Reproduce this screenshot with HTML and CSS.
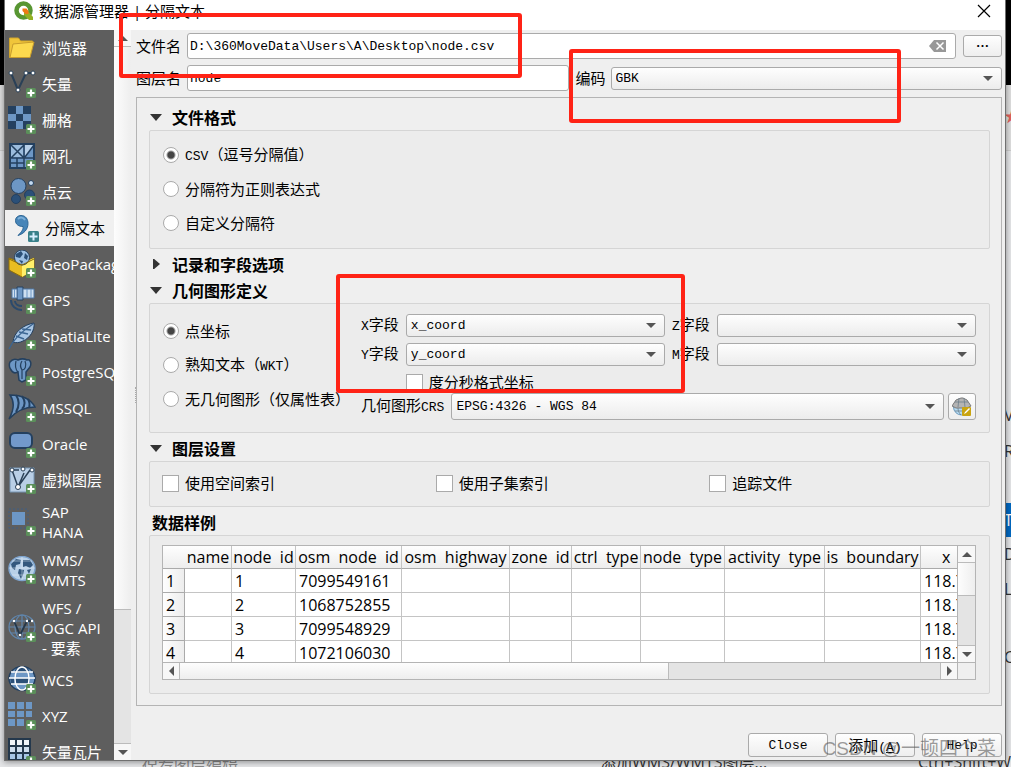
FILE: index.html
```html
<!DOCTYPE html>
<html lang="zh-CN">
<head>
    <meta charset="UTF-8">
    <meta name="viewport" content="width=device-width, initial-scale=1.0">
    <title>数据源管理器 | 分隔文本</title>
    <link rel="stylesheet" href="styles.css">
</head>
<body>
    <!-- main window showing round the edges of the dialog -->
    <div class="backdrop" aria-hidden="true">
        <div class="back-dark"></div>
        <div class="back-toolbar"></div>
        <span class="frag frag-star">★</span>
        <span class="frag frag-v">V</span>
        <span class="frag frag-r">R</span>
        <span class="frag frag-t">T</span>
        <span class="frag frag-d">D</span>
        <span class="frag frag-l">L</span>
        <span class="frag frag-c">C</span>
        <span class="frag frag-save">保存图层编辑</span>
        <span class="frag frag-wms">添加WMS/WMTS图层...</span>
        <span class="frag frag-key">Ctrl+Shift+W</span>
    </div>

    <svg class="defs" aria-hidden="true">
        <defs>
            <symbol id="plus" viewBox="0 0 10 10">
                <rect width="10" height="10" rx="1.5" fill="#5b8f5a"/>
                <path d="M5 1.500v7M1.500 5h7" stroke="#fff" stroke-width="2.200"/>
            </symbol>
        </defs>
    </svg>

    <div class="dialog">
        <header class="titlebar">
            <svg class="logo" viewBox="0 0 20 20">
                <circle cx="9.5" cy="9.5" r="7" fill="none" stroke="#589632" stroke-width="4.5"/>
                <path d="M10 10h4l5 6v3h-4l-5-5z" fill="#93b023"/>
                <path d="M8.500 7.500h4l2 2.500v3h-3l-3-3z" fill="#ee7913"/>
            </svg>
            <h1>数据源管理器 | 分隔文本</h1>
            <button class="close" aria-label="关闭">
                <svg viewBox="0 0 14 14"><path d="M1 1l12 12M13 1L1 13" stroke="#000" stroke-width="1.2"/></svg>
            </button>
        </header>

        <div class="content">
            <nav class="sidebar">
                <a href="#" class="item">
                    <svg viewBox="0 0 28 28"><path d="M1.500 4h9l2 3h12v4H6L3 23.500H1.500z" fill="#f0c53a" stroke="#d1a52b"/><path d="M5 10l21-2-4 15.500H2z" fill="#fcd94e" stroke="#c79c2d"/></svg>
                    <span>浏览器</span>
                </a>
                <a href="#" class="item">
                    <svg viewBox="0 0 28 28"><path d="M3 3l7 17 8-17h7" fill="none" stroke="#2a4057" stroke-width="2"/><g fill="#fff" stroke="#2a4057"><circle cx="3" cy="3" r="2"/><circle cx="10" cy="20" r="2"/><circle cx="18" cy="3" r="2"/><circle cx="25" cy="3" r="2"/></g><use href="#plus" x="18" y="18" width="10" height="10"/></svg>
                    <span>矢量</span>
                </a>
                <a href="#" class="item">
                    <svg viewBox="0 0 28 28"><path d="M0 0h23v23H0z" fill="#6d97c5"/><path d="M0 0h8v8H0zM15 0h8v8h-8zM8 8h7v7H8zM0 15h8v8H0zM15 15h8v8h-8z" fill="#24405f"/><use href="#plus" x="18" y="18" width="10" height="10"/></svg>
                    <span>栅格</span>
                </a>
                <a href="#" class="item">
                    <svg viewBox="0 0 28 28"><path d="M2 2h24v24H2z" fill="#6d97c5" stroke="#24405f" stroke-width="2"/><path d="M3 3h12v12H3z" fill="#9bbbdc"/><path d="M17 15V3h9z" fill="#b7cfe8"/><path d="M16 2v24M2 16h24M3 3l13 13M16 3L3 16M26 3L17 15M2 21h14M9 16v10" stroke="#24405f" stroke-width="1.5" fill="none"/><use href="#plus" x="18" y="18" width="10" height="10"/></svg>
                    <span>网孔</span>
                </a>
                <a href="#" class="item">
                    <svg viewBox="0 0 28 28"><g stroke="#24405f"><circle cx="10.500" cy="8" r="7.500" fill="#6d97c5"/><circle cx="23" cy="5" r="2.500" fill="#c4daf0"/><circle cx="21.500" cy="17" r="5" fill="#2b5078"/><circle cx="8" cy="21" r="4.500" fill="#2b5078"/></g><use href="#plus" x="18" y="18" width="10" height="10"/></svg>
                    <span>点云</span>
                </a>
                <a href="#" class="item selected" aria-current="page">
                    <svg viewBox="0 0 28 28"><path d="M4.500 6.500c0-3.500 3-5 5.500-5 5 0 7 4 7 8 0 6-4 10-10 12 4-4 5.500-6.500 5-9-4 0-7.500-2-7.500-6z" fill="#4785b8" stroke="#2d6695"/><path d="M7 5c2-2 5-2 7 1" stroke="#7db0da" stroke-width="2" fill="none"/><rect x="17" y="17" width="11" height="11" rx="1.500" fill="#39818a"/><path d="M22.500 18.500v8M18.500 22.500h8" stroke="#d8efff" stroke-width="2"/></svg>
                    <span>分隔文本</span>
                </a>
                <a href="#" class="item">
                    <svg viewBox="0 0 28 28"><path d="M1 8l13 5 12-5v12l-12 7-13-7z" fill="#e9bd22" stroke="#8d6e0b"/><path d="M14 13l12-5v12l-12 7z" fill="#fff06a"/><circle cx="14" cy="7.500" r="7.500" fill="#9cc0e4" stroke="#24405f"/><path d="M8 4l5-3 2 3-3 4-4-1zM17 3l3 3-1 4-3-2zM11 10l4 1-1 3z" fill="#2b5078"/><path d="M1 9l13 6 12-6" fill="none" stroke="#8d6e0b"/><use href="#plus" x="18" y="18" width="10" height="10"/></svg>
                    <span>GeoPackage</span>
                </a>
                <a href="#" class="item">
                    <svg viewBox="0 0 28 28"><path d="M9 1h6v13H9z" fill="#6d97c5" stroke="#24405f"/><path d="M4 3h5v9H4zM15 3h11v9H15z" fill="#cfe0f1" stroke="#4c77a5"/><path d="M6.500 3v9M19 3v9M23 3v9" stroke="#6d97c5"/><path d="M3 14c0 6 5 10 11 10M7 15c0 3 3 5 7 5" fill="none" stroke="#2b4a6c" stroke-width="2"/><use href="#plus" x="18" y="18" width="10" height="10"/></svg>
                    <span>GPS</span>
                </a>
                <a href="#" class="item">
                    <svg viewBox="0 0 28 28"><path d="M5 20C6 10 15 3 26 1c1 7-4 15-11 18-4 2-7 2-10 1z" fill="#a9c6e4" stroke="#24405f"/><path d="M1 27c3-7 9-15 24-25M11 10l9 2M14 7l9 1M8 14l8 3" fill="none" stroke="#3b6592" stroke-width="1.400"/><use href="#plus" x="18" y="18" width="10" height="10"/></svg>
                    <span>SpatiaLite</span>
                </a>
                <a href="#" class="item">
                    <svg viewBox="0 0 28 28"><path d="M2 4c3-4 6-3 8-2 4-2 7-1 9 0 3-1 5 3 3 7l-4 5 0 8-4 2-3-2-1-8-3 1C3 14 0 8 2 4z" fill="#6d97c5" stroke="#24405f" stroke-width="1.500"/><path d="M8 3c-1 4-1 8 2 11M17 3c2 5 0 9-3 9-2-3-2-6 0-9M14 12v9" fill="none" stroke="#24405f" stroke-width="1.200"/><use href="#plus" x="18" y="18" width="10" height="10"/></svg>
                    <span>PostgreSQL</span>
                </a>
                <a href="#" class="item">
                    <svg viewBox="0 0 28 28"><path d="M2 1c10 0 20 3 25 12-10 0-18 3-26 12C6 16 7 8 2 1z" fill="#6d97c5" stroke="#24405f" stroke-width="1.500"/><path d="M8 1c4 6 3 12 0 17M14 2c4 6 3 10 0 13M20 5c2 4 2 6 1 8" fill="none" stroke="#24405f" stroke-width="2"/><use href="#plus" x="18" y="18" width="10" height="10"/></svg>
                    <span>MSSQL</span>
                </a>
                <a href="#" class="item">
                    <svg viewBox="0 0 28 28"><rect x="2" y="3" width="22" height="15" rx="5" fill="#7299cb" stroke="#24405f" stroke-width="2"/><use href="#plus" x="18" y="18" width="10" height="10"/></svg>
                    <span>Oracle</span>
                </a>
                <a href="#" class="item">
                    <svg viewBox="0 0 28 28"><path d="M2 2h24v24H2z" fill="#b9cfe6" stroke="#7795b3"/><path d="M4 4l6 17 12-17M10 21L16 7M4 4l7 0" fill="none" stroke="#2a4057" stroke-width="1.500"/><g fill="#fff" stroke="#2a4057"><circle cx="4" cy="4" r="2"/><circle cx="10" cy="21" r="2.500"/><circle cx="15" cy="3" r="2"/><circle cx="24" cy="4" r="2"/></g><use href="#plus" x="18" y="18" width="10" height="10"/></svg>
                    <span>虚拟图层</span>
                </a>
                <a href="#" class="item">
                    <svg viewBox="0 0 28 28"><path d="M1 1h19v19H1z" fill="none" stroke="#3f5f85" stroke-dasharray="2 2"/><path d="M4 4h13v13H4z" fill="#6d97c5"/><use href="#plus" x="18" y="18" width="10" height="10"/></svg>
                    <span>SAP<br>HANA</span>
                </a>
                <a href="#" class="item">
                    <svg viewBox="0 0 28 28"><ellipse cx="14" cy="12.500" rx="13" ry="12" fill="#b8d0e8" stroke="#7fa5cf" stroke-width="1.500"/><path d="M3 8l5-5 5 1-1 4-4 1-1 5-3-2zM15 4l7 0 3 5-3 3-4-2-3 1zM11 13l5 1-1 5-2 4-3-6zM19 14l4-1-2 5z" fill="#34587e"/><path d="M1 12h26M14 1v23M4 5h20M4 19h20" stroke="#e7f1fb" stroke-width=".7" opacity=".7"/><use href="#plus" x="18" y="18" width="10" height="10"/></svg>
                    <span>WMS/<br>WMTS</span>
                </a>
                <a href="#" class="item">
                    <svg viewBox="0 0 28 28"><g fill="none" stroke="#6086ad" stroke-width="1.200"><ellipse cx="14" cy="13" rx="13" ry="12"/><ellipse cx="14" cy="13" rx="7" ry="12"/><path d="M1 13h26M3 7h22M3 19h22M14 1v24"/></g><path d="M6 7l6 14 7-14h5" fill="none" stroke="#25384b" stroke-width="1.800"/><g fill="#fff"><circle cx="6" cy="7" r="1.200"/><circle cx="12" cy="21" r="1.200"/><circle cx="19" cy="7" r="1.200"/><circle cx="24" cy="7" r="1.200"/></g><use href="#plus" x="18" y="18" width="10" height="10"/></svg>
                    <span>WFS /<br>OGC API<br>- 要素</span>
                </a>
                <a href="#" class="item">
                    <svg viewBox="0 0 28 28"><ellipse cx="14" cy="12.500" rx="13" ry="12" fill="#6d97c5" stroke="#24405f" stroke-width="1.500"/><path d="M8 2h12l2 5H6zM7 12h14v6H7zM2 12h4v6H3z" fill="#2b5078"/><g fill="none" stroke="#fff" stroke-width="1.300"><ellipse cx="14" cy="12.500" rx="7" ry="11.500"/><path d="M1 12h26M3 6h22M3 18h22"/></g><use href="#plus" x="18" y="18" width="10" height="10"/></svg>
                    <span>WCS</span>
                </a>
                <a href="#" class="item">
                    <svg viewBox="0 0 28 28"><path d="M0 0h7v7H0zM9 0h7v7H9zM18 0h6v7h-6zM0 9h7v6H0zM9 9h7v6H9zM18 9h6v6h-6zM0 17h7v7H0zM9 17h7v7H9z" fill="#6d97c5"/><use href="#plus" x="18" y="18" width="10" height="10"/></svg>
                    <span>XYZ</span>
                </a>
                <a href="#" class="item">
                    <svg viewBox="0 0 28 28"><path d="M0 0h23v23H0z" fill="#24384c"/><path d="M2 2h5v5H2zM9 2h5v5H9zM16 2h5v5h-5z" fill="#f1f5f9"/><path d="M2 9h5v5H2zM9 9h5v5H9zM16 9h5v5h-5z" fill="#cfdeee"/><path d="M2 16h5v5H2zM9 16h5v5H9zM16 16h5v5h-5z" fill="#a8c6e6"/><use href="#plus" x="18" y="18" width="10" height="10"/></svg>
                    <span>矢量瓦片</span>
                </a>
            </nav>

            <div class="scroll-v side-scroll">
                <button class="arrow up" aria-label="向上"></button>
                <div class="thumb"></div>
                <div class="track"></div>
                <button class="arrow down" aria-label="向下"></button>
            </div>
            <div class="splitter"></div>

            <main class="main">
                <div class="row">
                    <label class="name" for="file">文件名</label>
                    <div class="file-field">
                        <input id="file" type="text" value="D:\360MoveData\Users\A\Desktop\node.csv">
                        <button class="clear" aria-label="清除">
                            <svg viewBox="0 0 17 12"><path d="M0 6l5-6h12v12H5z" fill="#989898"/><path d="M7.500 2.500l7 7M14.500 2.500l-7 7" stroke="#fff" stroke-width="1.500"/></svg>
                        </button>
                    </div>
                    <button class="btn browse">…</button>
                </div>
                <div class="row">
                    <label class="name" for="layer">图层名</label>
                    <input id="layer" class="layer-field" type="text" value="node">
                    <label class="enc" for="encoding">编码</label>
                    <select id="encoding" class="enc-field"><option>GBK</option></select>
                </div>

                <div class="panel">
                    <h2><i class="tri open"></i>文件格式</h2>
                    <div class="group format">
                        <label><input type="radio" name="format" checked><span><span class="lat">CSV</span>（逗号分隔值）</span></label>
                        <label><input type="radio" name="format"><span>分隔符为正则表达式</span></label>
                        <label><input type="radio" name="format"><span>自定义分隔符</span></label>
                    </div>

                    <h2><i class="tri"></i>记录和字段选项</h2>
                    <h2><i class="tri open"></i>几何图形定义</h2>
                    <div class="group geometry">
                        <div class="geom-type">
                            <label><input type="radio" name="geom" checked><span>点坐标</span></label>
                            <label><input type="radio" name="geom"><span>熟知文本（<span class="lat">WKT</span>）</span></label>
                            <label><input type="radio" name="geom"><span>无几何图形（仅属性表）</span></label>
                        </div>
                        <div class="geom-form">
                            <div class="fields">
                                <label for="xf"><span class="lat">X</span>字段</label>
                                <select id="xf"><option>x_coord</option></select>
                                <label for="zf"><span class="lat">Z</span>字段</label>
                                <select id="zf"><option></option></select>
                                <label for="yf"><span class="lat">Y</span>字段</label>
                                <select id="yf"><option>y_coord</option></select>
                                <label for="mf"><span class="lat">M</span>字段</label>
                                <select id="mf"><option></option></select>
                                <label class="dms"><input type="checkbox"><span>度分秒格式坐标</span></label>
                            </div>
                            <div class="crs">
                                <label for="crs">几何图形<span class="lat">CRS</span></label>
                                <select id="crs"><option>EPSG:4326 - WGS 84</option></select>
                                <button class="btn" aria-label="选择坐标系">
                                    <svg viewBox="0 0 20 20"><circle cx="9.500" cy="10" r="8" fill="#b5daf2" stroke="#6e9bbd"/><path d="M0 9l4-6 5-2h2l4 2 4 6-4 2H4z" fill="#b4b4b4" stroke="#7b7b7b"/><path d="M7 1L6 10M12 1l1 9M3 5h13M6 11c0 3 1 5 3 7M3 14h9" stroke="#6d7f8b" stroke-width=".8" fill="none"/><rect x="10" y="10" width="9" height="9" rx="1" fill="#c9a411"/><path d="M12 17l1-2 4-4 1 1-4 4z" fill="#fff"/></svg>
                                </button>
                            </div>
                        </div>
                    </div>

                    <h2><i class="tri open"></i>图层设置</h2>
                    <div class="group settings">
                        <label><input type="checkbox"><span>使用空间索引</span></label>
                        <label><input type="checkbox"><span>使用子集索引</span></label>
                        <label><input type="checkbox"><span>追踪文件</span></label>
                    </div>

                    <h2 class="plain">数据样例</h2>
                    <div class="group sample">
                        <div class="grid">
                            <div class="view">
                                <table>
                                    <thead>
                                        <tr><th></th><th>name</th><th>node&nbsp; id</th><th>osm&nbsp; node&nbsp; id</th><th>osm&nbsp; highway</th><th>zone&nbsp; id</th><th>ctrl&nbsp; type</th><th>node&nbsp; type</th><th>activity&nbsp; type</th><th>is&nbsp; boundary</th><th>x&nbsp; coord</th></tr>
                                    </thead>
                                    <tbody>
                                        <tr><th>1</th><td></td><td>1</td><td>7099549161</td><td></td><td></td><td></td><td></td><td></td><td></td><td>118.78</td></tr>
                                        <tr><th>2</th><td></td><td>2</td><td>1068752855</td><td></td><td></td><td></td><td></td><td></td><td></td><td>118.78</td></tr>
                                        <tr><th>3</th><td></td><td>3</td><td>7099548929</td><td></td><td></td><td></td><td></td><td></td><td></td><td>118.78</td></tr>
                                        <tr><th>4</th><td></td><td>4</td><td>1072106030</td><td></td><td></td><td></td><td></td><td></td><td></td><td>118.78</td></tr>
                                    </tbody>
                                </table>
                            </div>
                            <div class="scroll-v grid-v">
                                <button class="arrow up" aria-label="向上"></button>
                                <div class="thumb"></div>
                                <div class="track"></div>
                                <button class="arrow down" aria-label="向下"></button>
                            </div>
                            <div class="scroll-h">
                                <button class="arrow left" aria-label="向左"></button>
                                <div class="thumb"></div>
                                <div class="track"></div>
                                <button class="arrow right" aria-label="向右"></button>
                            </div>
                            <div class="corner"></div>
                        </div>
                    </div>
                </div>

                <footer class="buttons">
                    <button class="btn">Close</button>
                    <button class="btn"><span class="cjk">添加</span>(<u>A</u>)</button>
                    <button class="btn">Help</button>
                </footer>
            </main>
        </div>
    </div>

    <!-- annotations -->
    <div class="mark mark-file"></div>
    <div class="mark mark-encoding"></div>
    <div class="mark mark-xy"></div>
    <div class="watermark">CSDN @一顿四个菜</div>
</body>
</html>
```
FILE: styles.css
```css
* {
    box-sizing: border-box;
}
body {
    margin: 0;
    height: 100vh;
    padding: 0 5px 6px 4px;
    overflow: hidden;
    position: relative;
    background: #e4e5e7;
    color: #000;
    font-family: "Noto Sans CJK SC", sans-serif;
    font-size: 15px;
    line-height: 20px;
}
button, input, select {
    font-family: "Liberation Mono", "Noto Sans CJK SC", monospace;
    font-size: 13px;
    color: #000;
    margin: 0;
}
.defs {
    position: absolute;
    width: 0;
    height: 0;
}
.lat {
    font-family: "Liberation Mono", monospace;
    font-size: 13px;
}

/* window behind */
.backdrop {
    position: absolute;
    inset: 0;
    overflow: hidden;
    font-family: "Open Sans", "Noto Sans CJK SC", sans-serif;
    font-size: 16px;
}
.back-dark {
    height: 85px;
    background: #000;
}
.back-toolbar {
    height: 66px;
    background: #dedede;
    border-bottom: 1px solid #ccc;
}
.frag {
    position: absolute;
    white-space: nowrap;
    left: 1004px;
    color: #333;
}
.frag-star { top: 106px; color: #e0605c; }
.frag-v { top: 405px; }
.frag-r { top: 441px; }
.frag-t {
    top: 503px;
    height: 34px;
    width: 20px;
    line-height: 34px;
    background: #0067c0;
    color: #fff;
}
.frag-d { top: 544px; }
.frag-l { top: 579px; }
.frag-c { top: 647px; }
.frag-save { top: 757px; left: 142px; color: #888; }
.frag-wms { top: 752px; left: 600px; }
.frag-key { top: 752px; left: 918px; }

/* dialog */
.dialog {
    position: relative;
    height: 100%;
    display: flex;
    flex-direction: column;
    background: #efefef;
    border: 1px solid #707070;
    border-top: 0;
    box-shadow: 0 1px 6px rgba(0,0,0,0.4);
}
.titlebar {
    height: 30px;
    flex: none;
    display: flex;
    align-items: center;
    padding: 0 14px 8px 9px;
    background: #fff;
}
.logo {
    width: 20px;
    height: 20px;
    margin-right: 5px;
}
h1 {
    flex: 1;
    margin: 0;
    font-family: "Open Sans", "Noto Sans CJK SC", sans-serif;
    font-size: 15px;
    font-weight: normal;
}
.close {
    border: 0;
    padding: 0;
    background: none;
    width: 14px;
    height: 14px;
}
.close svg {
    display: block;
}
.content {
    flex: 1;
    min-height: 0;
    display: flex;
}

/* sidebar */
.sidebar {
    width: 109px;
    flex: none;
    overflow: hidden;
    background: #5e5e5e;
    font-family: "Open Sans", "Noto Sans CJK SC", sans-serif;
}
.item {
    display: flex;
    align-items: center;
    gap: 6px;
    min-height: 36px;
    padding: 4px 0 4px 3px;
    color: #fff;
    text-decoration: none;
    white-space: nowrap;
}
.item svg {
    width: 28px;
    height: 28px;
    flex: none;
}
.item.selected {
    padding-left: 6px;
    background: #f0f0f0;
    color: #000;
}

/* scroll bars */
.scroll-v, .scroll-h {
    display: flex;
    background: #e4e4e4;
}
.scroll-v {
    flex-direction: column;
}
.side-scroll {
    width: 17px;
    flex: none;
}
.arrow {
    width: 17px;
    height: 17px;
    flex: none;
    padding: 0;
    border: 0;
    background: #f7f7f7 center no-repeat;
}
.up {
    background-image: url("data:image/svg+xml,%3Csvg xmlns='http://www.w3.org/2000/svg' width='10' height='5'%3E%3Cpath d='M0 5h10L5 0z' fill='%23555'/%3E%3C/svg%3E");
    border-bottom: 1px solid #bbb;
}
.down {
    background-image: url("data:image/svg+xml,%3Csvg xmlns='http://www.w3.org/2000/svg' width='10' height='5'%3E%3Cpath d='M0 0h10L5 5z' fill='%23555'/%3E%3C/svg%3E");
    border-top: 1px solid #bbb;
}
.left {
    background-image: url("data:image/svg+xml,%3Csvg xmlns='http://www.w3.org/2000/svg' width='5' height='10'%3E%3Cpath d='M5 0v10L0 5z' fill='%23555'/%3E%3C/svg%3E");
    border-right: 1px solid #bbb;
}
.right {
    background-image: url("data:image/svg+xml,%3Csvg xmlns='http://www.w3.org/2000/svg' width='5' height='10'%3E%3Cpath d='M0 0v10L5 5z' fill='%23555'/%3E%3C/svg%3E");
    border-left: 1px solid #bbb;
}
.side-scroll .thumb {
    flex: 563;
    background: linear-gradient(90deg, #fdfdfd, #eee);
    border-bottom: 1px solid #bbb;
}
.side-scroll .track {
    flex: 133;
}
.splitter {
    width: 5px;
    flex: none;
    align-self: center;
    height: 16px;
    border-right: 1px dotted #aaa;
}

/* form */
.main {
    flex: 1;
    min-width: 0;
    display: flex;
    flex-direction: column;
    padding: 3px 3px 3px 0;
}
.row {
    display: flex;
    align-items: center;
    height: 26px;
    margin-bottom: 6px;
}
.name {
    width: 51px;
    flex: none;
}
input[type="text"] {
    height: 26px;
    padding: 0 2px;
    border: 1px solid #aaa;
    border-radius: 3px;
    background: #fff;
}
.file-field {
    flex: 1;
    position: relative;
    margin-right: 7px;
}
.file-field input {
    display: block;
    width: 100%;
}
.clear {
    position: absolute;
    right: 10px;
    top: 7px;
    width: 17px;
    height: 12px;
    padding: 0;
    border: 0;
    background: none;
}
.clear svg {
    display: block;
}
.btn {
    height: 24px;
    padding: 0;
    border: 1px solid #aaa;
    border-radius: 3px;
    background: linear-gradient(#fefefe, #eee);
}
.browse {
    width: 39px;
    height: 22px;
    font-family: "Noto Sans CJK SC", sans-serif;
    font-weight: bold;
    line-height: 16px;
}
.layer-field {
    flex: 375;
    min-width: 0;
}
.enc {
    margin: 0 5px 0 7px;
}
.enc-field {
    flex: 361;
    min-width: 0;
}
select {
    appearance: none;
    height: 23px;
    min-width: 0;
    padding: 0 24px 0 4px;
    border: 1px solid #aaa;
    border-radius: 3px;
    background: url("data:image/svg+xml,%3Csvg xmlns='http://www.w3.org/2000/svg' width='10' height='5'%3E%3Cpath d='M0 0h10L5 5z' fill='%23555'/%3E%3C/svg%3E") no-repeat right 8px center, linear-gradient(#fefefe, #ececec);
}
.panel {
    border: 1px solid #b4b4b4;
    padding: 6px 11px 9px 12px;
}
h2 {
    display: flex;
    align-items: center;
    height: 26px;
    margin: 0;
    font-size: 16px;
    font-weight: bold;
}
.plain {
    padding-left: 3px;
}
.tri {
    width: 23px;
    height: 10px;
    background: url("data:image/svg+xml,%3Csvg xmlns='http://www.w3.org/2000/svg' width='12' height='12'%3E%3Cpath d='M3 0v12l7-6z' fill='%23333'/%3E%3C/svg%3E") no-repeat 1px center;
}
.tri.open {
    background-image: url("data:image/svg+xml,%3Csvg xmlns='http://www.w3.org/2000/svg' width='12' height='12'%3E%3Cpath d='M0 3h12L6 10z' fill='%23333'/%3E%3C/svg%3E");
}
.group {
    margin-bottom: 2px;
    border: 1px solid #d5d5d5;
    border-radius: 2px;
    background: #ececec;
}
.group label {
    white-space: nowrap;
}
.format, .geom-type {
    display: flex;
    flex-direction: column;
}
.format label, .geom-type label, .settings label, .dms {
    display: flex;
    align-items: center;
    gap: 6px;
}
.format label, .geom-type label {
    height: 34px;
}
.format {
    padding: 7px 13px 8px;
}
input[type="radio"], input[type="checkbox"] {
    appearance: none;
    flex: none;
    width: 17px;
    height: 17px;
    border: 1px solid #aaa;
    background: #fff;
}
input[type="radio"] {
    width: 16px;
    height: 16px;
    border-radius: 50%;
}
input[type="radio"]:checked {
    background: radial-gradient(circle, #444 3px, #fff 5px);
}
.geometry {
    display: flex;
    padding: 10px 13px 12px;
}
.geom-type {
    width: 198px;
    flex: none;
}
.geom-form {
    flex: 1;
    min-width: 0;
}
.fields {
    display: grid;
    grid-template-columns: auto 1fr auto 1fr;
    align-items: center;
    gap: 6px 7px;
}
.dms {
    grid-column: 2 / 5;
    height: 20px;
}
.crs {
    display: flex;
    align-items: center;
    margin-top: 1px;
}
.crs select {
    flex: 1;
    height: 27px;
    margin: 0 4px 0 7px;
}
.crs .btn {
    width: 28px;
    height: 27px;
    display: flex;
    align-items: center;
    justify-content: center;
}
.crs svg {
    width: 20px;
    height: 20px;
}
.settings {
    display: grid;
    grid-template-columns: 1fr 1fr 1fr;
    padding: 11px 6px 13px 12px;
}

/* sample table */
.sample {
    padding: 9px 13px 13px 12px;
}
.grid {
    display: grid;
    grid-template-columns: 1fr 17px;
    grid-template-rows: 116px 17px;
    border: 1px solid #b4b4b4;
    background: #fff;
}
.view {
    min-width: 0;
    overflow: hidden;
    border-right: 1px solid #b4b4b4;
}
table {
    table-layout: fixed;
    width: 820px;
    border-collapse: separate;
    border-spacing: 0;
    font-family: "Open Sans", sans-serif;
    font-size: 16px;
}
th, td {
    height: 24px;
    padding: 0 0 0 3px;
    border-right: 1px solid #c4c4c4;
    border-bottom: 1px solid #c4c4c4;
    font-weight: normal;
    text-align: left;
    white-space: nowrap;
    line-height: 20px;
}
thead th {
    height: 23px;
    padding: 0;
    text-align: center;
    border-bottom-color: #aaa;
    background: linear-gradient(#fefefe, #ededed);
}
tbody th {
    border-color: #aaa;
    background: linear-gradient(90deg, #fefefe, #ededed);
}
thead th:nth-child(1) { width: 22px; border-right: 0; }
thead th:nth-child(2) { width: 47px; }
thead th:nth-child(3) { width: 64px; }
thead th:nth-child(4) { width: 106px; }
thead th:nth-child(5) { width: 108px; }
thead th:nth-child(6) { width: 62px; }
thead th:nth-child(7) { width: 69px; }
thead th:nth-child(8) { width: 84px; }
thead th:nth-child(9) { width: 100px; }
thead th:nth-child(10) { width: 96px; }
thead th:nth-child(11) { text-align: left; padding-left: 21px; }
.grid-v .thumb {
    flex: 33;
    background: linear-gradient(90deg, #fdfdfd, #eee);
    border-bottom: 1px solid #bbb;
}
.grid-v .track {
    flex: 50;
}
.scroll-h {
    border-top: 1px solid #b4b4b4;
    border-right: 1px solid #b4b4b4;
}
.scroll-h .arrow {
    height: 16px;
}
.scroll-h .thumb {
    flex: 489;
    background: linear-gradient(#fdfdfd, #eee);
    border-right: 1px solid #bbb;
}
.scroll-h .track {
    flex: 272;
}
.corner {
    border-top: 1px solid #b4b4b4;
    background: #efefef;
}
.buttons {
    display: flex;
    justify-content: flex-end;
    gap: 7px;
    margin-top: auto;
}
.buttons .btn {
    width: 80px;
}
.cjk {
    font-family: "Noto Sans CJK SC", sans-serif;
    font-size: 15px;
    line-height: 18px;
}

/* annotations */
.mark {
    position: absolute;
    border: 4px solid #ff2316;
    border-radius: 3px;
}
.mark-file { left: 119px; top: 13px; width: 403px; height: 65px; }
.mark-encoding { left: 569px; top: 49px; width: 332px; height: 74px; }
.mark-xy { left: 336px; top: 274px; width: 349px; height: 119px; }
.watermark {
    position: absolute;
    right: 15px;
    bottom: 6px;
    font-family: "Liberation Sans", "Noto Sans CJK SC", sans-serif;
    font-size: 19px;
    line-height: 24px;
    color: rgba(90,90,90,0.6);
}
```
